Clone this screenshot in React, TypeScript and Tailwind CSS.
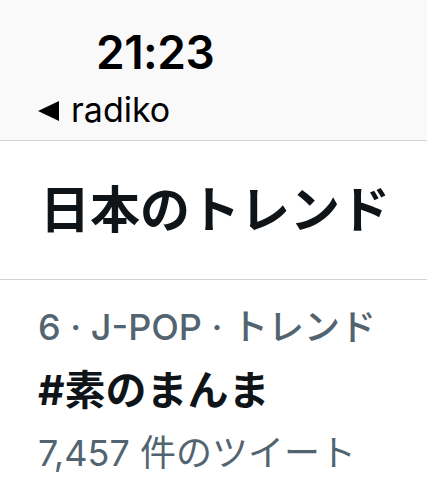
import React from 'react';

const font = { fontFamily: 'Inter, "Noto Sans CJK JP", sans-serif' };

const StatusHeader: React.FC = () => (
  <div className="h-[141px] bg-[#f9f9fa] border-b border-[#d4d4d7] pl-[38px] pt-[26px]">
    <div className="pl-[58px] text-[46px] leading-[52px] font-semibold text-black tracking-[-0.5px]">21:23</div>
    <div className="mt-[11px] flex items-center gap-[12px]">
      <svg width="21" height="20" viewBox="0 0 21 20" className="shrink-0 w-[21px] h-[20px] mt-[2px]">
        <polygon points="21,0 21,20 0,10" fill="#000" />
      </svg>
      <span className="text-[34px] leading-[42px] text-black">radiko</span>
    </div>
  </div>
);

export default function App() {
  const trend = {
    rank: 6,
    category: 'J-POP',
    tag: '#素のまんま',
    count: '7,457',
  };

  return (
    <div className="w-[427px] h-[502px] bg-white overflow-hidden" style={font}>
      <StatusHeader />

      {/* page title */}
      <div className="h-[139px] border-b border-[#d4d4d7] pl-[40px] flex items-center">
        <h1 className="text-[50px] leading-[56px] font-bold text-[#0f1419]">日本のトレンド</h1>
      </div>

      {/* trend row */}
      <div className="pl-[38px] pt-[24px]">
        <div className="text-[36px] leading-[46px] text-[#536471] font-medium">
          {trend.rank} · {trend.category} · トレンド
        </div>
        <div className="mt-[16px] text-[41px] leading-[48px] font-bold text-[#0f1419]">{trend.tag}</div>
        <div className="mt-[16px] text-[36px] leading-[46px] text-[#536471]">
          {trend.count} 件のツイート
        </div>
      </div>
    </div>
  );
}
